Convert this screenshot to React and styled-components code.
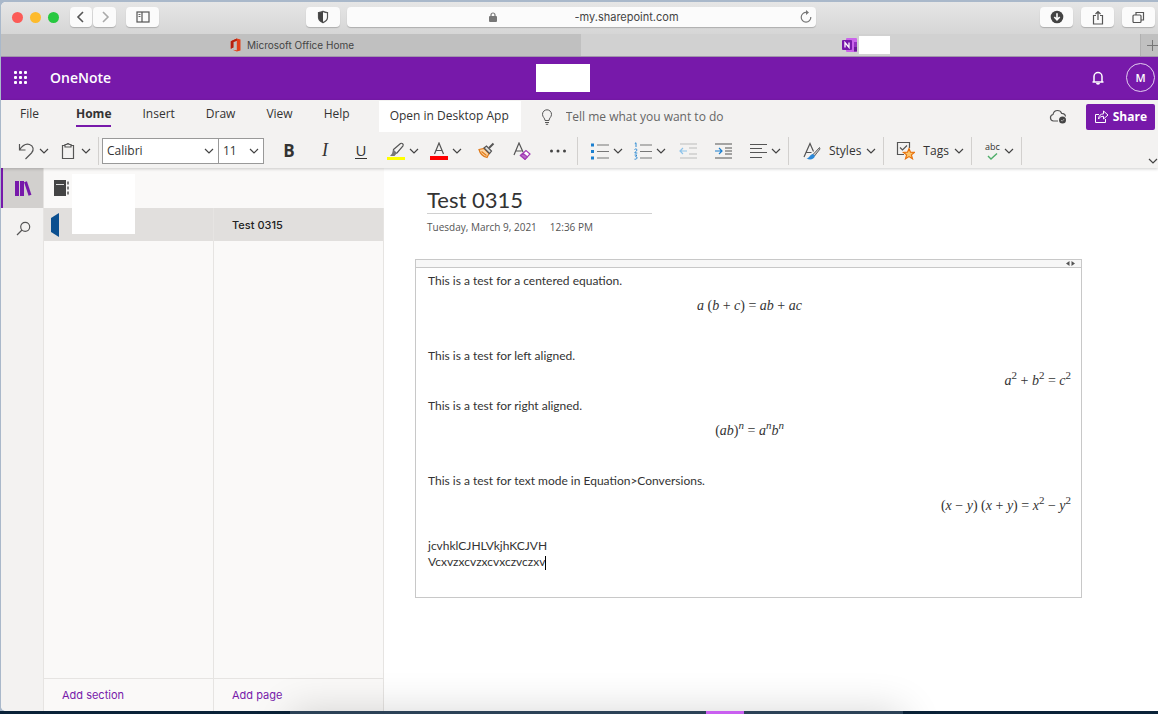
import styled, { createGlobalStyle } from 'styled-components';

const ui = "'Open Sans', 'Noto Sans', sans-serif";
const system = "Inter, 'Liberation Sans', sans-serif";
const note = "Lato, 'Open Sans', sans-serif";
const math = "'Liberation Serif', serif";

const MENU = ['File', 'Home', 'Insert', 'Draw', 'View', 'Help'];

function Chevron({ color = '#444' }) {
  return (
    <svg width="10" height="6" viewBox="0 0 10 6" fill="none" stroke={color} strokeWidth="1.2" aria-hidden="true">
      <path d="M1 1l4 4 4-4" />
    </svg>
  );
}

function Icon({ width = 18, height = 18, children }) {
  return (
    <svg width={width} height={height} viewBox={`0 0 ${width} ${height}`} fill="none" stroke="#555" strokeWidth="1.2" aria-hidden="true">
      {children}
    </svg>
  );
}

function Browser() {
  return (
    <>
      <BrowserBar>
        <BarSide>
          <Lights>
            <Light $color="#fc5b57" />
            <Light $color="#fdbb2d" />
            <Light $color="#27c840" />
          </Lights>
          <Joined>
            <BarButton $w={22} aria-label="Back">
              <Icon width={10} height={12}>
                <path d="M7 1L2 6l5 5" strokeWidth="1.6" />
              </Icon>
            </BarButton>
            <BarButton $w={23} aria-label="Forward">
              <Icon width={10} height={12}>
                <path d="M3 1l5 5-5 5" stroke="#aaa" strokeWidth="1.6" />
              </Icon>
            </BarButton>
          </Joined>
          <BarButton $w={33} aria-label="Sidebar">
            <Icon width={14} height={12}>
              <rect x="1" y="1" width="12" height="10" />
              <path d="M6 1v10" />
              <path d="M2.5 3.5h2M2.5 5.5h2" strokeWidth="0.9" />
            </Icon>
          </BarButton>
          <ShieldButton $w={34} aria-label="Privacy report">
            <Icon width={12} height={14}>
              <path d="M6 1.4c1.7.9 3.2 1.2 4.5 1.2v4.8c0 2.3-2 4-4.5 5.2C3.5 11.4 1.5 9.7 1.5 7.4V2.6C2.8 2.6 4.3 2.3 6 1.4z" />
              <path d="M6 1.4v11.2C3.5 11.4 1.5 9.7 1.5 7.4V2.6C2.8 2.6 4.3 2.3 6 1.4z" fill="#444" stroke="none" />
            </Icon>
          </ShieldButton>
        </BarSide>
        <Address>
          <AddressText>
            <Icon width={8} height={10}>
              <rect x="0" y="4" width="8" height="6" rx="1" fill="#777" stroke="none" />
              <path d="M2 4.5V3a2 2 0 014 0v1.5" stroke="#777" />
            </Icon>
            <UrlInput aria-label="Address" defaultValue="-my.sharepoint.com" />
          </AddressText>
          <PlainButton aria-label="Reload">
            <Icon width={14} height={14}>
              <path d="M7.5 2.5A4.8 4.8 0 1011.8 7" stroke="#777" />
              <path d="M7 0l3 2.5L7 5z" fill="#777" stroke="none" />
            </Icon>
          </PlainButton>
        </Address>
        <BarEnd>
          <BarButton $w={33} aria-label="Downloads">
            <Icon width={14} height={14}>
              <circle cx="7" cy="7" r="6.3" fill="#444" stroke="none" />
              <path d="M7 3.2v6M4.3 7L7 9.8 9.7 7" stroke="#fff" strokeWidth="1.6" />
            </Icon>
          </BarButton>
          <BarButton $w={33} aria-label="Share page">
            <Icon width={12} height={15}>
              <path d="M4 5.5H1.5V14h9V5.5H8M6 10V1.5M3.5 4L6 1.5 8.5 4" />
            </Icon>
          </BarButton>
          <BarButton $w={33} aria-label="Show tabs">
            <Icon width={13} height={13}>
              <rect x="1" y="4" width="8" height="7.5" rx="1" />
              <path d="M4 4V1.5h7.5V9H9" />
            </Icon>
          </BarButton>
        </BarEnd>
      </BrowserBar>
      <BrowserTabs>
        <BrowserTab>
          <Icon width={11} height={14}>
            <path d="M6.8.5L10.5 1.6v10.8L6.8 13.5 2.5 11.8l4.3.4V2.8L3.4 4v5.6L.8 10.8V3.2z" fill="#e2401b" stroke="none" />
            <path d="M6.8.5L.8 3.2v7.6l2.6-1.2V4l3.4-1.2z" fill="#b5200f" stroke="none" />
          </Icon>
          Microsoft Office Home
        </BrowserTab>
        <BrowserTab $active>
          <Icon width={16} height={16}>
            <rect x="4" y="1" width="11" height="14" rx="1" fill="#ca64ea" stroke="none" />
            <path d="M12 5h3v5h-3z" fill="#9332bf" stroke="none" />
            <path d="M12 10h3v4.5h-3z" fill="#6b1a97" stroke="none" />
            <rect x="0" y="3" width="10" height="10" rx="1" fill="#7719aa" stroke="none" />
            <path d="M3 10.5v-5l4 5v-5" stroke="#fff" strokeWidth="1.3" />
          </Icon>
          <Blank $w={31} $h={18} />
        </BrowserTab>
        <NewTab aria-label="New tab">
          <Icon width={11} height={11}>
            <path d="M5.5 0v11M0 5.5h11" stroke="#777" strokeWidth="1" />
          </Icon>
        </NewTab>
      </BrowserTabs>
    </>
  );
}

function SuiteHeader() {
  return (
    <Suite>
      <SuiteLeft>
        <PlainButton aria-label="App launcher">
          <Icon width={15} height={15}>
            {[0, 5, 10].map((y) =>
              [1, 6, 11].map((x) => (
                <rect key={`${x}-${y}`} x={x} y={y + 1} width="3" height="3" rx="1" fill="#fff" stroke="none" />
              ))
            )}
          </Icon>
        </PlainButton>
        <AppName>OneNote</AppName>
      </SuiteLeft>
      <Blank $w={54} $h={28} />
      <SuiteRight>
        <PlainButton aria-label="Notifications">
          <Icon width={14} height={16}>
            <path d="M1.5 12h11M3 12V6.5a4 4 0 018 0V12" stroke="#fff" strokeWidth="1.5" />
            <path d="M5 13a2 1.8 0 004 0z" fill="#fff" stroke="none" />
          </Icon>
        </PlainButton>
        <Avatar aria-label="Account">M</Avatar>
      </SuiteRight>
    </Suite>
  );
}

function Ribbon() {
  return (
    <RibbonBox>
      <MenuRow>
        {MENU.map((name) => (
          <MenuTab key={name} $active={name === 'Home'} $wide={name === 'File'}>
            <span>{name}</span>
          </MenuTab>
        ))}
        <OpenButton>Open in Desktop App</OpenButton>
        <TellMe>
          <Icon width={12} height={16}>
            <path d="M4 11.5C4 9 1.5 8.3 1.5 5.3a4.5 4.5 0 019 0C10.5 8.3 8 9 8 11.5zM4 13.5h4M4.8 15.3h2.4" strokeWidth="1" />
          </Icon>
          <TellInput aria-label="Tell me" placeholder="Tell me what you want to do" />
        </TellMe>
        <PlainButton aria-label="Saved">
          <Icon width={18} height={15}>
            <path d="M9 12H4.5a3.3 3.3 0 01-.5-6.5C4.5 3 6.3 1.5 8.5 1.5c2 0 3.5 1.1 4.1 2.8 2 0 3.7 1.2 3.9 3.2" />
            <circle cx="13.5" cy="11" r="3.5" fill="#444" stroke="none" />
            <path d="M12 11l1.2 1.2 2-2.2" stroke="#bbb" strokeWidth="0.8" />
          </Icon>
        </PlainButton>
        <ShareButton>
          <Icon width={15} height={15}>
            <path d="M5 5.5H1.5v8h10v-3.5M4.5 10c.3-3.3 2-5 5-5.2V2L14 6l-4.5 4V7.3C7.3 7.3 5.8 8 4.5 10z" stroke="#fff" strokeWidth="1" />
          </Icon>
          Share
        </ShareButton>
      </MenuRow>

      <ToolRow>
        <SplitTool aria-label="Undo">
          <Icon width={17} height={18}>
            <path d="M1.5 2v6h6M1.5 8C4 4 8 1.5 11.5 2.5c4 1.3 4.8 5.5 2 8.5L7.5 17" />
          </Icon>
          <Chevron />
        </SplitTool>
        <SplitTool aria-label="Paste">
          <Icon width={17} height={18}>
            <path d="M5 3.5H2.5v13h11v-13H11" />
            <path d="M5 5V2.5h1.8c.3-1.2 2.1-1.2 2.4 0H11V5z" />
          </Icon>
          <Chevron />
        </SplitTool>
        <Divider $after={3} />
        <Combos>
          <Combo $w={115}>
            <ComboSelect aria-label="Font">
              <option>Calibri</option>
            </ComboSelect>
            <Chevron />
          </Combo>
          <Combo $w={45}>
            <ComboSelect aria-label="Font size">
              <option>11</option>
            </ComboSelect>
            <Chevron />
          </Combo>
        </Combos>
        <TextTools>
          <Tool aria-label="Bold">
            <Bold>B</Bold>
          </Tool>
          <Tool aria-label="Italic">
            <Italic>I</Italic>
          </Tool>
          <Tool aria-label="Underline">
            <Underlined>U</Underlined>
          </Tool>
        </TextTools>
        <SplitTool aria-label="Highlight">
          <Icon width={18} height={18}>
            <rect x="0" y="15" width="18" height="3" fill="#ff0" stroke="none" />
            <path d="M6.5 7.5L13.5 1.5c1.5-.8 3.3.8 2.5 2.3L10 11l-4 1z" />
            <path d="M6.5 7.5l-1 3.5L3 14h4.5l2.5-3z" fill="#777" stroke="none" />
          </Icon>
          <Chevron />
        </SplitTool>
        <SplitTool aria-label="Font color">
          <Icon width={18} height={18}>
            <path d="M4.5 12L9 1l4.5 11M6 8.5h6" />
            <rect x="0" y="14" width="18" height="4" fill="#f00" stroke="none" />
          </Icon>
          <Chevron />
        </SplitTool>
        <Tool aria-label="Format painter">
          <Icon width={17} height={17}>
            <path d="M1 7.500l5-1 5 5-2 4C5 14.500 2 11.500 1 7.500z" fill="#fbd5a5" stroke="#e07a1a" />
            <path d="M3.500 9.500l5 4" stroke="#e07a1a" />
            <path d="M6 6l2.5-2 5 5-2 2.500z" fill="#ddd" />
            <path d="M11 6l4.500-4.500" strokeWidth="2" />
          </Icon>
        </Tool>
        <Tool aria-label="Clear formatting">
          <Icon width={18} height={18}>
            <path d="M1 13L6 1l4 9M2.700 9h6" />
            <path d="M7.500 13.500l5.500-5 4 3.500-5 5.300z" fill="#fff" stroke="#a33cb5" />
            <path d="M7.500 13.500l2.500-2.300 4.300 3.700-2.300 2.400z" fill="#b86cc6" stroke="#a33cb5" />
          </Icon>
        </Tool>
        <Tool aria-label="More options">
          <Icon width={18} height={4}>
            <g fill="#444" stroke="none">
              <circle cx="2.5" cy="2" r="1.5" />
              <circle cx="9" cy="2" r="1.5" />
              <circle cx="15.5" cy="2" r="1.5" />
            </g>
          </Icon>
        </Tool>
        <Divider $after={8} />
        <SplitTool aria-label="Bullets">
          <Icon>
            <path d="M6 3h12M6 9.5h12M6 16h12" stroke="#777" />
            <path d="M0 3h3M0 9.5h3M0 16h3" stroke="#1a7fd0" strokeWidth="3" />
          </Icon>
          <Chevron />
        </SplitTool>
        <SplitTool aria-label="Numbering">
          <Icon>
            <path d="M6 3h12M6 9.5h12M6 16h12" stroke="#777" />
            <path d="M.8 1.5L2 .8V5M.5 7.5c1-1 2.500-.5 2.500.5C3 9 .8 9.800.8 11H3.300M.6 13h2.200L1.700 14.700c2 0 2 2.800-1.200 2.500" stroke="#1a7fd0" strokeWidth="0.9" />
          </Icon>
          <Chevron />
        </SplitTool>
        <Tool $w={32} aria-label="Decrease indent">
          <Icon>
            <path d="M1 2h17M10 6h8M10 12h8M1 16h17" stroke="#bbb" />
            <path d="M8 9H1M4 6L1 9l3 3" stroke="#8dc3ea" />
          </Icon>
        </Tool>
        <Tool $w={40} aria-label="Increase indent">
          <Icon>
            <path d="M0 2h17M10 6h7M10 12h7M0 16h17" />
            <path d="M10 9h7" />
            <path d="M0 9h7M4 6l3 3-3 3" stroke="#1a7fd0" />
          </Icon>
        </Tool>
        <SplitTool aria-label="Alignment">
          <Icon>
            <path d="M1 2.5h17M1 6.5h12M1 10.5h17M1 15.5h12" />
          </Icon>
          <Chevron />
        </SplitTool>
        <Divider $after={8} />
        <LabelTool>
          <Icon>
            <path d="M1 15L7 1.5l3.5 8M3 10.500h5.500" />
            <path d="M16.500 5.500L10 12.500l1.500 1.500L17 7z" fill="#ccc" strokeWidth="0.9" />
            <path d="M10 12c-3 0-3 4-6.500 4.500C7 18.500 11 17.500 12 14z" fill="#2b88d8" stroke="none" />
          </Icon>
          <span>Styles</span>
          <Chevron />
        </LabelTool>
        <Divider $after={6} />
        <LabelTool>
          <Icon width={19} height={19}>
            <path d="M8 13.5H1.5v-12h12V7" />
            <path d="M4 6.5l2.500 2.500L11 4.500" />
            <path d="M13 7.500l1.500 3.700 4 .2-3.100 2.500 1.100 3.900L13 15.600l-3.500 2.200 1.100-3.900-3.100-2.500 4-.2z" fill="#fbc56d" stroke="#e8720c" />
          </Icon>
          <span>Tags</span>
          <Chevron />
        </LabelTool>
        <Divider $after={8} />
        <SplitTool aria-label="Spelling">
          <Spelling>
            abc
            <Icon width={11} height={7}>
              <path d="M1 3l3 3 6-5.5" stroke="#4fae6a" strokeWidth="1.4" />
            </Icon>
          </Spelling>
          <Chevron />
        </SplitTool>
        <Divider $after={0} />
        <Collapse aria-label="Collapse ribbon">
          <Chevron />
        </Collapse>
      </ToolRow>
    </RibbonBox>
  );
}

function Navigation() {
  return (
    <>
      <Rail>
        <RailButton $active aria-label="Notebooks">
          <Icon width={17} height={15}>
            <path d="M2 0v15M7 0v15" stroke="#7719aa" strokeWidth="4" />
            <path d="M10.5.8l4.5 13.4" stroke="#7719aa" strokeWidth="3" />
          </Icon>
        </RailButton>
        <RailButton aria-label="Search">
          <Icon width={15} height={15}>
            <circle cx="9.2" cy="5.8" r="4.5" />
            <path d="M6 9L1 14" />
          </Icon>
        </RailButton>
      </Rail>
      <NavPanel>
        <Notebook>
          <Icon width={16} height={16}>
            <path d="M0 0h12v16H0z" fill="#444" stroke="none" />
            <path d="M2 4.5h8" stroke="#ddd" />
            <path d="M14 1.5v3M14 6.5v3M14 11.5v3" strokeWidth="1.5" />
          </Icon>
          <NotebookName />
        </Notebook>
        <Lists>
          <List>
            <ListItem aria-label="Section">
              <SectionMark>
                <svg width="8" height="24" viewBox="0 0 8 24" aria-hidden="true">
                  <path d="M8 0v24L0 19V5z" fill="#0b4f8f" />
                </svg>
              </SectionMark>
            </ListItem>
            <AddButton>Add section</AddButton>
          </List>
          <List>
            <ListItem>Test 0315</ListItem>
            <AddButton>Add page</AddButton>
          </List>
        </Lists>
      </NavPanel>
    </>
  );
}

function Page() {
  return (
    <Canvas>
      <Title>Test 0315</Title>
      <Stamp>
        <span>Tuesday, March 9, 2021</span>
        <span>12:36 PM</span>
      </Stamp>
      <Outline>
        <Handle>
          <svg width="9" height="5" viewBox="0 0 9 5" aria-hidden="true">
            <path d="M3.5 0v5L0 2.5zM5.5 0v5L9 2.5z" fill="#555" />
          </svg>
        </Handle>
        <OutlineBody>
          <Line>This is a test for a centered equation.</Line>
          <Equation $align="center">
            <i>a</i> (<i>b</i> + <i>c</i>) = <i>ab</i> + <i>ac</i>
          </Equation>
          <Line />
          <Line>This is a test for left aligned.</Line>
          <Equation $align="right">
            <i>a</i>
            <sup>2</sup> + <i>b</i>
            <sup>2</sup> = <i>c</i>
            <sup>2</sup>
          </Equation>
          <Line>This is a test for right aligned.</Line>
          <Equation $align="center">
            (<i>ab</i>)
            <sup>
              <i>n</i>
            </sup>{' '}
            = <i>a</i>
            <sup>
              <i>n</i>
            </sup>
            <i>b</i>
            <sup>
              <i>n</i>
            </sup>
          </Equation>
          <Line />
          <Line>This is a test for text mode in Equation&gt;Conversions.</Line>
          <Equation $align="right">
            (<i>x</i> − <i>y</i>) (<i>x</i> + <i>y</i>) = <i>x</i>
            <sup>2</sup> − <i>y</i>
            <sup>2</sup>
          </Equation>
          <Typed>
            jcvhklCJHLVkjhKCJVH
            <br />
            Vcxvzxcvzxcvxczvczxv
            <Caret />
          </Typed>
        </OutlineBody>
      </Outline>
    </Canvas>
  );
}

export default function App() {
  return (
    <Desktop>
      <GlobalStyle />
      <Window>
        <Browser />
        <SuiteHeader />
        <Ribbon />
        <Workspace>
          <Navigation />
          <Page />
        </Workspace>
      </Window>
      <DesktopEdge>
        <Dock />
        <DockItem />
      </DesktopEdge>
    </Desktop>
  );
}

const GlobalStyle = createGlobalStyle`
  * {
    box-sizing: border-box;
  }
  body {
    margin: 0;
    font-family: ${ui};
    font-size: 12px;
    color: #333;
  }
  button, input, select {
    font: inherit;
    color: inherit;
    border: 0;
    padding: 0;
    background: none;
  }
  svg {
    display: block;
    flex: none;
  }
`;
const Desktop = styled.div`
  min-height: 100vh;
  display: flex;
  flex-direction: column;
  padding: 2px 0 0 1px;
  background: #a9b8ca;
  overflow: hidden;
`;
const Window = styled.div`
  flex: 1;
  display: flex;
  flex-direction: column;
  border-radius: 5px 0 0 5px;
  overflow: hidden;
  background: #fff;
`;
const DesktopEdge = styled.div`
  position: relative;
  height: 3px;
  margin-left: -1px;
  background: #0a2238;
`;
const Dock = styled.div`
  position: absolute;
  left: 25%;
  right: 22%;
  height: 60px;
  background: #2c4257;
  box-shadow: 0 0 40px rgba(0, 0, 0, 0.16);
`;
const DockItem = styled.div`
  position: absolute;
  left: 61%;
  width: 38px;
  height: 3px;
  background: #c95ff0;
`;
const Blank = styled.div`
  flex: none;
  width: ${({ $w }) => $w}px;
  height: ${({ $h }) => $h}px;
  background: #fff;
`;
const PlainButton = styled.button`
  display: flex;
  align-items: center;
  justify-content: center;
`;

const BrowserBar = styled.div`
  display: grid;
  grid-template-columns: 346fr 469fr 342fr;
  align-items: center;
  height: 32px;
  padding-bottom: 2px;
  background: linear-gradient(#e6e6e6, #d6d6d6);
  font-family: ${system};
`;
const BarSide = styled.div`
  display: flex;
  align-items: center;
  gap: 10px;
  padding: 0 7px 0 11px;
`;
const BarEnd = styled(BarSide)`
  justify-content: flex-end;
  gap: 8px;
  padding: 0 3px 0 0;
`;
const Lights = styled.div`
  display: flex;
  gap: 7px;
  margin-right: 1px;
`;
const Light = styled.span`
  width: 11px;
  height: 11px;
  border-radius: 50%;
  background: ${({ $color }) => $color};
`;
const Joined = styled.div`
  display: flex;
  gap: 1px;
`;
const BarButton = styled.button`
  display: flex;
  align-items: center;
  justify-content: center;
  width: ${({ $w }) => $w}px;
  height: 20px;
  border-radius: 4px;
  background: #fbfbfb;
  box-shadow: 0 1px 1px rgba(0, 0, 0, 0.2);
`;
const ShieldButton = styled(BarButton)`
  margin-left: auto;
`;
const Address = styled.div`
  display: grid;
  grid-template-columns: 1fr 20px;
  padding-left: 24px;
  height: 20px;
  border-radius: 4px;
  background: #fbfbfb;
  box-shadow: 0 1px 1px rgba(0, 0, 0, 0.2);
`;
const AddressText = styled.div`
  display: flex;
  align-items: center;
  justify-content: center;
  gap: 78px;
`;
const UrlInput = styled.input`
  width: 104px;
  height: 20px;
  font-size: 11px;
  color: #444;
`;
const BrowserTabs = styled.div`
  display: grid;
  grid-template-columns: 580fr 559fr 18px;
  height: 23px;
  border-bottom: 1px solid #a294ab;
  font-family: ${system};
  font-size: 10px;
  color: #444;
`;
const BrowserTab = styled.div`
  display: flex;
  align-items: center;
  justify-content: center;
  gap: ${({ $active }) => ($active ? 1 : 6)}px;
  padding-left: ${({ $active }) => ($active ? 10 : 2)}px;
  background: ${({ $active }) => ($active ? '#d1d1d1' : '#c0c0c0')};
`;
const NewTab = styled(PlainButton)`
  justify-content: flex-end;
  border-left: 1px solid #b0b0b0;
  background: #c0c0c0;
`;

const Suite = styled.header`
  display: grid;
  grid-template-columns: 535fr 54px 568fr;
  align-items: center;
  height: 43px;
  padding-bottom: 2px;
  background: #7719aa;
  color: #fff;
`;
const SuiteLeft = styled.div`
  display: flex;
  align-items: center;
  gap: 22px;
  padding-left: 12px;
`;
const AppName = styled.span`
  font-size: 14px;
  font-weight: 600;
`;
const SuiteRight = styled.div`
  display: flex;
  align-items: center;
  justify-content: flex-end;
  gap: 21px;
  padding-right: 3px;
`;
const Avatar = styled.button`
  width: 29px;
  height: 29px;
  border: 1px solid #e3cdf0;
  border-radius: 50%;
  font-size: 11px;
  font-weight: 600;
`;

const RibbonBox = styled.div`
  position: relative;
  z-index: 1;
  background: #f3f2f1;
  box-shadow: 0 1px 3px rgba(0, 0, 0, 0.2);
`;
const MenuRow = styled.div`
  display: flex;
  align-items: center;
  height: 33px;
  padding: 0 3px 0 4px;
`;
const MenuTab = styled.button`
  height: 33px;
  padding: 0 16px 3px 15px;
  margin-right: ${({ $wide }) => ($wide ? 6 : 0)}px;
  font-weight: ${({ $active }) => ($active ? 700 : 400)};

  span {
    display: block;
    padding: 2px 0 3px;
    border-bottom: 2px solid ${({ $active }) => ($active ? '#7719aa' : 'transparent')};
  }
`;
const OpenButton = styled.button`
  height: 31px;
  margin-left: 13px;
  padding: 0 12px 2px 11px;
  background: #fff;
`;
const TellMe = styled.div`
  flex: 1;
  display: flex;
  align-items: center;
  gap: 13px;
  padding-left: 20px;
`;
const TellInput = styled.input`
  width: 240px;
  height: 24px;
  &::placeholder {
    color: #666;
    opacity: 1;
  }
`;
const ShareButton = styled.button`
  display: flex;
  align-items: center;
  gap: 4px;
  height: 26px;
  margin-left: 19px;
  padding: 0 8px;
  border-radius: 2px;
  background: #7719aa;
  color: #fff;
  font-weight: 700;
`;
const ToolRow = styled.div`
  display: flex;
  align-items: center;
  height: 35px;
  padding-left: 12px;
`;
const Tool = styled.button`
  display: flex;
  align-items: center;
  justify-content: center;
  flex: none;
  width: ${({ $w = 36 }) => $w}px;
  height: 28px;
`;
const SplitTool = styled(Tool)`
  width: auto;
  gap: 4px;
  padding: 0 6px 0 5px;
`;
const LabelTool = styled(Tool)`
  width: auto;
  gap: 5px;
  padding: 0 6px;

  span {
    margin-left: 3px;
  }
`;
const Divider = styled.span`
  width: 1px;
  height: 28px;
  margin: 0 ${({ $after }) => $after}px 0 1px;
  background: #d2d0ce;
`;
const Combos = styled.div`
  display: flex;
  border: 1px solid #999;
  background: #fff;
`;
const Combo = styled.div`
  display: flex;
  align-items: center;
  width: ${({ $w }) => $w}px;
  height: 24px;
  padding: 0 4px;

  & + & {
    border-left: 1px solid #999;
  }
`;
const ComboSelect = styled.select`
  flex: 1;
  min-width: 0;
  appearance: none;
`;
const TextTools = styled.div`
  display: flex;
  margin: 0 3px 0 7px;
`;
const Bold = styled.span`
  font-size: 17px;
  font-weight: 700;
`;
const Italic = styled.span`
  font-family: ${math};
  font-size: 18px;
  font-style: italic;
`;
const Underlined = styled.span`
  width: 12px;
  border-bottom: 1px solid #333;
  font-size: 15px;
  line-height: 16px;
`;
const Spelling = styled.span`
  display: flex;
  flex-direction: column;
  align-items: center;
  gap: 2px;
  font-size: 9px;
  line-height: 9px;
`;
const Collapse = styled(PlainButton)`
  align-self: flex-end;
  margin-left: auto;
  height: 14px;
`;

const Workspace = styled.main`
  flex: 1;
  display: flex;
`;
const Rail = styled.nav`
  width: 42px;
  background: #f3f2f1;
`;
const RailButton = styled(PlainButton)`
  width: 100%;
  height: 40px;
  border-left: 2px solid ${({ $active }) => ($active ? '#7719aa' : 'transparent')};
  background: ${({ $active }) => ($active ? '#d2d0ce' : 'none')};
`;
const NavPanel = styled.div`
  display: flex;
  flex-direction: column;
  width: 341px;
  border-left: 1px solid #e6e4e2;
  background: #faf9f8;
  font-family: ${system};
  font-size: 11px;
`;
const Notebook = styled.div`
  position: relative;
  display: flex;
  align-items: center;
  height: 40px;
  padding-left: 10px;
`;
const NotebookName = styled.div`
  position: absolute;
  top: 6px;
  left: 28px;
  width: 63px;
  height: 60px;
  background: #fff;
`;
const Lists = styled.div`
  flex: 1;
  display: flex;
`;
const List = styled.div`
  flex: 1;
  display: flex;
  flex-direction: column;
  border-right: 1px solid #e6e4e2;
`;
const ListItem = styled.button`
  display: flex;
  align-items: center;
  height: 33px;
  padding-left: 18px;
  background: #e1dfdd;
  color: #222;
  font-weight: 500;
`;
const SectionMark = styled.span`
  margin-left: -11px;
`;
const AddButton = styled.button`
  height: 33px;
  margin-top: auto;
  padding-left: 18px;
  border-top: 1px solid #e6e4e2;
  text-align: left;
  color: #7719aa;
`;

const Canvas = styled.section`
  flex: 1;
  padding: 19px 76px 0 31px;
`;
const Title = styled.h1`
  width: 225px;
  margin: 0 0 0 12px;
  border-bottom: 1px solid #d0d0d0;
  font-family: ${note};
  font-size: 22px;
  font-weight: 400;
  line-height: 26px;
`;
const Stamp = styled.div`
  display: flex;
  gap: 13px;
  margin-left: 12px;
  font-size: 10px;
  line-height: 26px;
  color: #555;
`;
const Outline = styled.article`
  margin-top: 19px;
  border: 1px solid #c8c8c8;
`;
const Handle = styled.div`
  display: flex;
  align-items: center;
  justify-content: flex-end;
  height: 8px;
  padding-right: 6px;
  border-bottom: 1px solid #c8c8c8;
  background: #f7f7f7;
`;
const OutlineBody = styled.div`
  padding: 0 10px 27px 12px;
  font-family: ${note};
  font-size: 12px;
  line-height: 25px;
`;
const Line = styled.p`
  height: 25px;
  margin: 0;
`;
const Equation = styled(Line)`
  font-family: ${math};
  font-size: 14px;
  text-align: ${({ $align }) => $align};

  sup {
    font-size: 11px;
    line-height: 0;
  }
`;
const Typed = styled(Line)`
  height: auto;
  margin-top: 20px;
  line-height: 16px;
`;
const Caret = styled.span`
  display: inline-block;
  width: 1px;
  height: 14px;
  background: #000;
  vertical-align: middle;
`;
